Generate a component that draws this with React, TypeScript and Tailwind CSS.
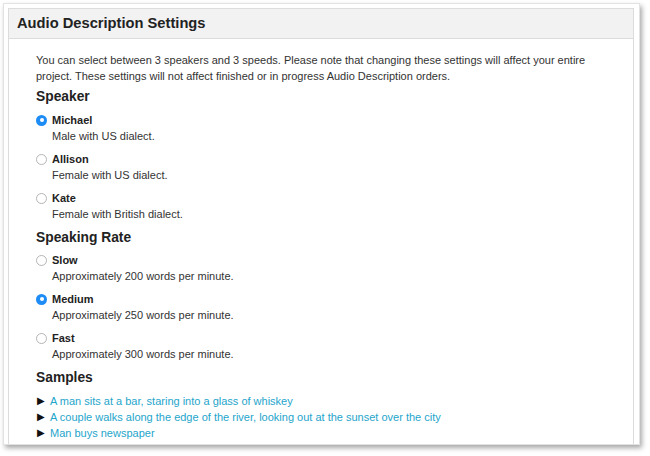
const speakers = [
  { name: 'Michael', desc: 'Male with US dialect.', checked: true },
  { name: 'Allison', desc: 'Female with US dialect.', checked: false },
  { name: 'Kate', desc: 'Female with British dialect.', checked: false },
];

const rates = [
  { name: 'Slow', desc: 'Approximately 200 words per minute.', checked: false },
  { name: 'Medium', desc: 'Approximately 250 words per minute.', checked: true },
  { name: 'Fast', desc: 'Approximately 300 words per minute.', checked: false },
];

const samples = [
  'A man sits at a bar, staring into a glass of whiskey',
  'A couple walks along the edge of the river, looking out at the sunset over the city',
  'Man buys newspaper',
];

type Option = { name: string; desc: string; checked: boolean };

const Radio = ({ checked }: { checked: boolean }) =>
  checked ? (
    <span className="flex h-[11px] w-[11px] items-center justify-center rounded-full bg-[#1e8cf5]">
      <span className="h-[4px] w-[4px] rounded-full bg-white" />
    </span>
  ) : (
    <span className="h-[11px] w-[11px] rounded-full border border-[#b5b5b5] bg-white" />
  );

const OptionList = ({ options, className }: { options: Option[]; className: string }) => (
  <div className={`flex flex-col gap-[7px] ${className}`}>
    {options.map((o) => (
      <div key={o.name} className="flex">
        <div className="flex h-[16px] w-[16px] items-center">
          <Radio checked={o.checked} />
        </div>
        <div className="flex flex-col">
          <span className="font-bold text-[#222]">{o.name}</span>
          <span>{o.desc}</span>
        </div>
      </div>
    ))}
  </div>
);

export default function App() {
  return (
    <div
      className="h-[456px] w-[650px] overflow-hidden bg-white pl-[3px] pt-[3px]"
      style={{ fontFamily: '"Liberation Sans", Arial, Helvetica, sans-serif' }}
    >
      <div className="h-[442px] w-[637px] overflow-hidden border border-[#e2e2e2] bg-white px-[4px] pt-[4px] shadow-[2px_3px_5px_rgba(0,0,0,0.35)]">
        <div className="w-[626px] border border-[#dcdcdc]">
          {/* Header */}
          <div className="flex h-[30px] items-center border-b border-[#dcdcdc] bg-[#f2f2f2] px-[8px]">
            <h1 className="text-[14.7px] font-bold text-[#222]">Audio Description Settings</h1>
          </div>

          {/* Body */}
          <div className="px-[27px] pb-[20px] pt-[13px] text-[11px] leading-[16px] text-[#333]">
            <p>
              You can select between 3 speakers and 3 speeds. Please note that changing these settings will affect your entire
              project. These settings will not affect finished or in progress Audio Description orders.
            </p>

            <h2 className="mt-[3px] text-[13.8px] font-bold leading-[20px] text-[#222]">Speaker</h2>
            <OptionList options={speakers} className="mt-[5px]" />

            <h2 className="mt-[6px] text-[13.8px] font-bold leading-[20px] text-[#222]">Speaking Rate</h2>
            <OptionList options={rates} className="mt-[4px]" />

            <h2 className="mt-[6px] text-[13.8px] font-bold leading-[20px] text-[#222]">Samples</h2>
            <ul className="mt-[5px] flex flex-col">
              {samples.map((s) => (
                <li key={s} className="flex items-center">
                  <span className="ml-[1px] w-[13px] text-[10px] text-[#111]">▶</span>
                  <a className="text-[#1ea5cb]">{s}</a>
                </li>
              ))}
            </ul>
          </div>
        </div>
      </div>
    </div>
  );
}
